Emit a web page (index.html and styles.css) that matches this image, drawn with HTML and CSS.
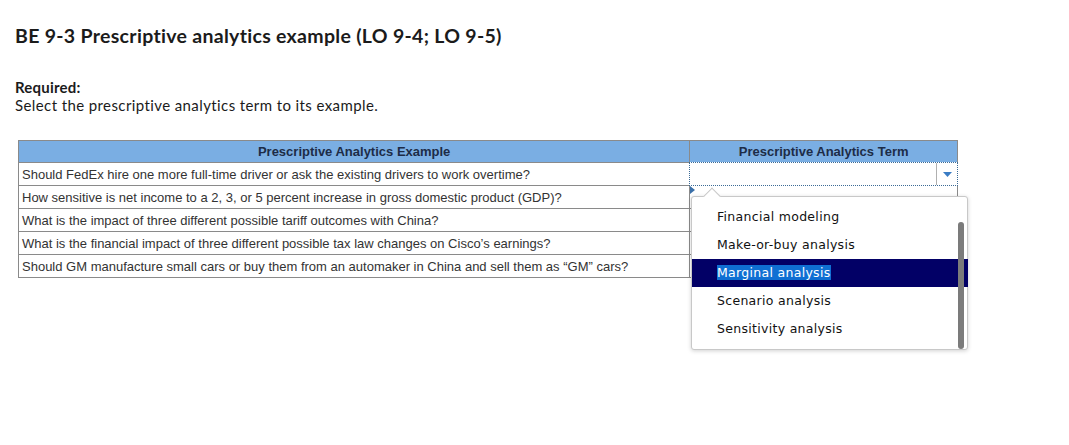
FILE: index.html
```html
<!DOCTYPE html>
<html>
<head>
<meta charset="utf-8">
<link rel="stylesheet" href="styles.css">
</head>
<body>
<div class="page">
  <h1 class="title">BE 9-3 Prescriptive analytics example (LO 9-4; LO 9-5)</h1>
  <div class="req">
    <div class="req-label">Required:</div>
    <div class="req-text">Select the prescriptive analytics term to its example.</div>
  </div>
  <div class="table-wrap">
    <table class="grid">
      <thead>
        <tr><th class="c1">Prescriptive Analytics Example</th><th class="c2">Prescriptive Analytics Term</th></tr>
      </thead>
      <tbody>
        <tr><td class="c1">Should FedEx hire one more full-time driver or ask the existing drivers to work overtime?</td>
          <td class="c2 sel-cell"><div class="select"><span class="sel-val"></span><span class="sel-btn"><svg width="9" height="5" viewBox="0 0 9 5"><path d="M0 0H9L4.5 5Z" fill="#3a7cc4"/></svg></span></div></td></tr>
        <tr><td class="c1">How sensitive is net income to a 2, 3, or 5 percent increase in gross domestic product (GDP)?</td><td class="c2"></td></tr>
        <tr><td class="c1">What is the impact of three different possible tariff outcomes with China?</td><td class="c2"></td></tr>
        <tr><td class="c1">What is the financial impact of three different possible tax law changes on Cisco’s earnings?</td><td class="c2"></td></tr>
        <tr><td class="c1">Should GM manufacture small cars or buy them from an automaker in China and sell them as “GM” cars?</td><td class="c2"></td></tr>
      </tbody>
    </table>
    <div class="popup">
      <span class="notch"></span>
      <span class="corner"></span>
      <ul class="options">
        <li>Financial modeling</li>
        <li>Make-or-buy analysis</li>
        <li class="active"><span class="hl">Marginal analysis</span></li>
        <li>Scenario analysis</li>
        <li>Sensitivity analysis</li>
      </ul>
      <span class="scrollbar"></span>
    </div>
  </div>
</div>
</body>
</html>
```
FILE: styles.css
```css
html, body {
  margin: 0;
  padding: 0;
  background: #ffffff;
  min-height: 445px;
}
.page {
  padding: 23px 0 0 15px;
  min-height: 420px;
}
.title {
  margin: 0;
  font-family: "Lato", "Liberation Sans", sans-serif;
  font-weight: 700;
  font-size: 19.5px;
  letter-spacing: 0.3px;
  line-height: 26px;
  color: #1b1b1b;
}
.req {
  margin-top: 29px;
  font-family: "Lato", "Liberation Sans", sans-serif;
  font-size: 15px;
  line-height: 18px;
  color: #1b1b1b;
}
.req-label {
  font-weight: 700;
  letter-spacing: 0.2px;
}
.req-text {
  letter-spacing: 0.4px;
}
.table-wrap {
  position: relative;
  margin: 26px 0 0 3px;
  width: 960px;
  height: 215px;
}
.grid {
  border-collapse: collapse;
  width: 940px;
  font-family: "Liberation Sans", Arial, sans-serif;
  font-size: 13px;
  color: #333333;
}
.grid th {
  background: #7aaee3;
  color: #1d2c47;
  font-weight: 700;
  height: 21px;
  padding: 0;
  border: 1px solid #8a8a8a;
  text-align: center;
}
.grid td {
  height: 22px;
  padding: 0 0 0 3px;
  border: 1px solid #8a8a8a;
  white-space: nowrap;
}
.grid .c1 { width: 668px; }
.grid .c2 { width: 266px; }
.grid td.sel-cell {
  padding: 0;
}
.select {
  position: relative;
  display: flex;
  margin: -1px;
  height: 22px;
  border: 1px dotted #3b6b96;
  background: #fff;
}
.sel-val { flex: 1; }
.sel-btn {
  width: 20px;
  border-left: 1px solid #b0b0b0;
  display: flex;
  align-items: center;
  justify-content: center;
}
.popup {
  position: absolute;
  left: 673px;
  top: 56px;
  width: 275px;
  height: 152px;
  background: #fff;
  border: 1px solid #c8c8c8;
  border-radius: 3px;
  box-shadow: 0 1px 4px rgba(0,0,0,0.18);
  font-family: "DejaVu Sans", Verdana, sans-serif;
  font-size: 12.5px;
  letter-spacing: 0.3px;
  color: #111;
}
.notch {
  position: absolute;
  left: 14px;
  top: -7px;
  width: 11px;
  height: 11px;
  background: #fff;
  border-left: 1px solid #c8c8c8;
  border-top: 1px solid #c8c8c8;
  transform: rotate(45deg);
}
.corner {
  position: absolute;
  left: -2px;
  top: -11px;
  width: 0;
  height: 0;
  border-left: 5px solid #3a6fa8;
  border-top: 4px solid transparent;
  border-bottom: 4px solid transparent;
}
.options {
  list-style: none;
  margin: 0;
  padding: 6px 0 0 0;
}
.options li {
  height: 28px;
  line-height: 28px;
  padding-left: 25px;
}
.options li.active {
  background: #020066;
  margin-right: -1px;
}
.hl {
  background: #0f6fd3;
  color: #fff;
}
.scrollbar {
  position: absolute;
  right: 3px;
  top: 25px;
  width: 6px;
  bottom: 0;
  background: #7b7b7b;
  border-radius: 3px;
}
```
